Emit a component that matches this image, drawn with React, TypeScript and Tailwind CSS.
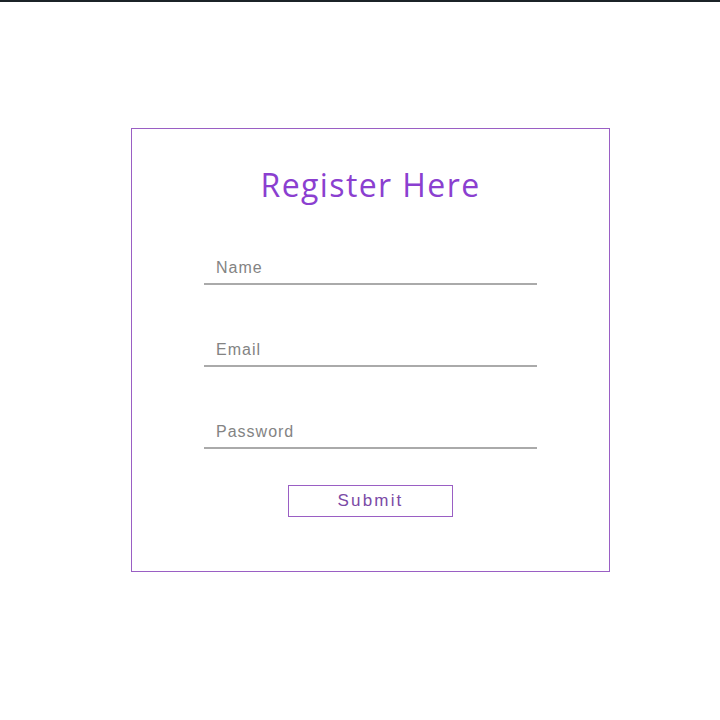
import React, { useState } from 'react';

const Field: React.FC<{ type: string; placeholder: string; className?: string }> = ({ type, placeholder, className }) => {
  const [value, setValue] = useState('');
  return (
    <input
      type={type}
      value={value}
      onChange={(e) => setValue(e.target.value)}
      placeholder={placeholder}
      className={`block w-[333px] h-[32px] mx-auto pl-[12px] pr-2 bg-transparent outline-none border-b-2 border-[#aaaaaa] text-[16px] tracking-[1px] text-[#555] placeholder:text-[#838383] font-['Liberation_Sans',Arial,sans-serif] ${className ?? ''}`}
    />
  );
};

const App: React.FC = () => {
  return (
    <div className="min-h-[720px] w-[720px] bg-white">
      <div className="h-[2px] bg-[#1b2327]" />
      <div className="pt-[126px] pl-[131px]">
        <form
          onSubmit={(e) => e.preventDefault()}
          className="w-[479px] h-[444px] border border-[#9a5fc4] pt-[34px]"
        >
          <h1 className="text-center text-[32px] leading-[44px] tracking-[1.4px] text-[#8b3fd0] font-['Open_Sans','Noto_Sans',sans-serif]">
            Register Here
          </h1>
          <Field type="text" placeholder="Name" className="mt-[46px]" />
          <Field type="email" placeholder="Email" className="mt-[50px]" />
          <Field type="password" placeholder="Password" className="mt-[50px]" />
          <div className="flex justify-center mt-[36px]">
            <button
              type="submit"
              className="w-[165px] h-[32px] border border-[#9a5fc4] text-[17px] tracking-[2.2px] text-[#7b4aa6] font-['Liberation_Sans',Arial,sans-serif]"
            >
              Submit
            </button>
          </div>
        </form>
      </div>
    </div>
  );
};

export default App;
